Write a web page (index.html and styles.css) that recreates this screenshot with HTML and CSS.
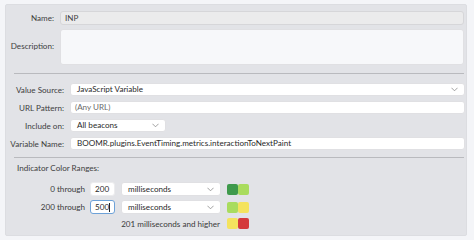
FILE: index.html
```html
<!DOCTYPE html>
<html>
<head>
<meta charset="utf-8">
<link rel="stylesheet" href="styles.css">
</head>
<body>
<div class="panel">
  <div class="grid top">
    <label class="lbl">Name:</label>
    <div class="field disabled">INP</div>
    <label class="lbl lbl-mid">Description:</label>
    <div class="field area"></div>
  </div>
  <hr class="sep sep1">
  <div class="grid mid">
    <label class="lbl">Value Source:</label>
    <div class="field select">JavaScript Variable<svg class="chev" viewBox="0 0 8 5"><path d="M0.5 0.5 L4 4 L7.5 0.5"/></svg></div>
    <label class="lbl">URL Pattern:</label>
    <div class="field placeholder">(Any URL)</div>
    <label class="lbl">Include on:</label>
    <div class="field select short">All beacons<svg class="chev" viewBox="0 0 8 5"><path d="M0.5 0.5 L4 4 L7.5 0.5"/></svg></div>
    <label class="lbl">Variable Name:</label>
    <div class="field">BOOMR.plugins.EventTiming.metrics.interactionToNextPaint</div>
  </div>
  <hr class="sep sep2">
  <div class="ranges">
    <div class="rtitle">Indicator Color Ranges:</div>
    <div class="rrow">
      <span class="rlbl">0 through</span>
      <div class="field num">200</div>
      <div class="field select unit">milliseconds<svg class="chev" viewBox="0 0 8 5"><path d="M0.5 0.5 L4 4 L7.5 0.5"/></svg></div>
      <span class="sw dkgreen"></span><span class="sw ltgreen"></span>
    </div>
    <div class="rrow">
      <span class="rlbl">200 through</span>
      <div class="field num focus">500<span class="caret"></span></div>
      <div class="field select unit">milliseconds<svg class="chev" viewBox="0 0 8 5"><path d="M0.5 0.5 L4 4 L7.5 0.5"/></svg></div>
      <span class="sw ltgreen"></span><span class="sw yellow"></span>
    </div>
    <div class="rrow last">
      <span class="rtext">201 milliseconds and higher</span>
      <span class="sw yellow"></span><span class="sw red"></span>
    </div>
  </div>
</div>
</body>
</html>
```

FILE: styles.css
```css
* { box-sizing: border-box; }
html, body { margin: 0; padding: 0; }
body {
  background: #f4f5f8;
  font-family: Lato, "Liberation Sans", sans-serif;
  font-size: 8.1px;
  color: #2a2a2a;
  width: 474px;
  height: 240px;
  overflow: hidden;
}
.panel {
  margin: 4px 7px 0 5px;
  height: 232px;
  background: #e2e3e7;
  border: 1px solid #dcdde1;
  border-radius: 2px;
  padding: 6px 2px 0 0;
}
.grid {
  display: grid;
  align-items: center;
}
.top {
  grid-template-columns: 48px 1fr;
  column-gap: 6px;
  row-gap: 4px;
}
.mid {
  grid-template-columns: 58px 1fr;
  column-gap: 6px;
  row-gap: 5px;
  margin-right: -1px;
}
.lbl {
  text-align: right;
  color: #3e3e3e;
  white-space: nowrap;
}
.lbl-mid { padding-bottom: 2px; }
.field {
  height: 13px;
  background: #fff;
  border: 1px solid #e0e0e3;
  border-radius: 3px;
  padding: 0 6px;
  display: flex;
  align-items: center;
  white-space: nowrap;
  overflow: hidden;
  line-height: 1;
}
.disabled {
  height: 14px;
  background: #ebebec;
  border-color: #d6d6d9;
  padding-left: 4px;
  color: #444;
}
.area {
  height: 36px;
  background: #f7f8fa;
}
.placeholder { color: #6a6a6a; padding-left: 4px; }
.select { justify-content: space-between; }
.chev {
  width: 7px;
  height: 5px;
  fill: none;
  stroke: #888;
  stroke-width: 0.9;
}
.short { width: 96px; }
.sep {
  border: 0;
  border-top: 1px solid #b9babe;
  margin: 0 0 0 8px;
}
.sep1 { margin-top: 8px; margin-bottom: 9px; }
.sep2 { margin-top: 7px; margin-bottom: 0; }
.ranges { padding: 6px 0 0 11px; }
.rtitle { color: #3e3e3e; height: 9px; line-height: 9px; margin-bottom: 9px; }
.rrow {
  display: flex;
  align-items: center;
  height: 14px;
  margin-bottom: 4px;
}
.rrow.last { height: 11px; }
.rlbl {
  width: 68px;
  text-align: right;
  color: #3a3a3a;
  white-space: nowrap;
}
.num {
  width: 25px;
  height: 14px;
  margin-left: 5px;
  padding: 0 4px;
  border-color: #ececee;
}
.focus { border-color: #6ea2d8; }
.caret {
  display: inline-block;
  width: 1px;
  height: 9px;
  background: #222;
}
.unit {
  width: 100px;
  height: 14px;
  margin-left: 6px;
  margin-right: 6px;
}
.rtext {
  width: 204px;
  padding-right: 1px;
  margin-right: 6px;
  text-align: right;
  color: #3a3a3a;
  white-space: nowrap;
}
.sw {
  width: 11px;
  height: 11px;
  border-radius: 2px;
  display: inline-block;
}
.dkgreen { background: #3f9a4c; }
.ltgreen { background: #a9dc5e; }
.yellow { background: #f4e35e; }
.red { background: #d43a3c; }
```
